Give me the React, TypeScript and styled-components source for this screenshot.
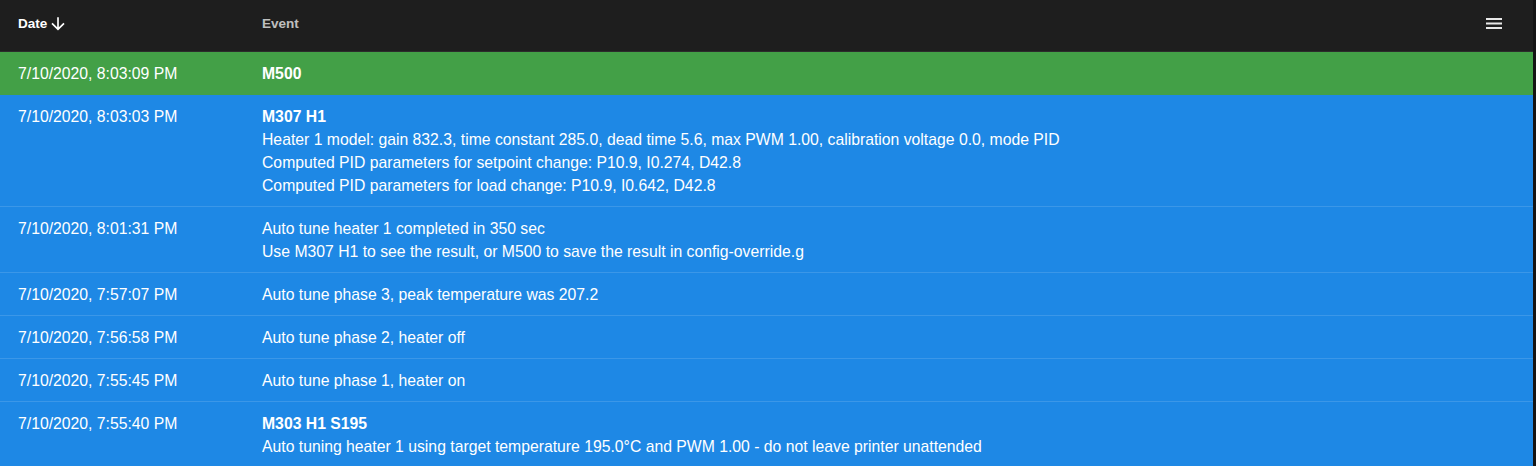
import React from "react";
import styled, { createGlobalStyle } from "styled-components";

const GlobalStyle = createGlobalStyle`
  html, body {
    margin: 0;
    padding: 0;
    background: #141414;
  }
  body {
    font-family: "Liberation Sans", Arial, sans-serif;
  }
`;

type Tone = "success" | "info";

interface LogEntry {
  date: string;
  title?: string;
  lines: string[];
  tone: Tone;
}

const entries: LogEntry[] = [
  { date: "7/10/2020, 8:03:09 PM", title: "M500", lines: [], tone: "success" },
  {
    date: "7/10/2020, 8:03:03 PM",
    title: "M307 H1",
    lines: [
      "Heater 1 model: gain 832.3, time constant 285.0, dead time 5.6, max PWM 1.00, calibration voltage 0.0, mode PID",
      "Computed PID parameters for setpoint change: P10.9, I0.274, D42.8",
      "Computed PID parameters for load change: P10.9, I0.642, D42.8",
    ],
    tone: "info",
  },
  {
    date: "7/10/2020, 8:01:31 PM",
    lines: [
      "Auto tune heater 1 completed in 350 sec",
      "Use M307 H1 to see the result, or M500 to save the result in config-override.g",
    ],
    tone: "info",
  },
  { date: "7/10/2020, 7:57:07 PM", lines: ["Auto tune phase 3, peak temperature was 207.2"], tone: "info" },
  { date: "7/10/2020, 7:56:58 PM", lines: ["Auto tune phase 2, heater off"], tone: "info" },
  { date: "7/10/2020, 7:55:45 PM", lines: ["Auto tune phase 1, heater on"], tone: "info" },
  {
    date: "7/10/2020, 7:55:40 PM",
    title: "M303 H1 S195",
    lines: ["Auto tuning heater 1 using target temperature 195.0°C and PWM 1.00 - do not leave printer unattended"],
    tone: "info",
  },
];

const toneColors: Record<Tone, string> = {
  success: "#43a047",
  info: "#1e88e5",
};

const Page = styled.div`
  padding-right: 3px;
  background: #141414;
  height: 466px;
  overflow: hidden;
`;

const Table = styled.div`
  display: grid;
  grid-template-columns: 244px 1fr auto;
  background: #1e88e5;
  min-height: 466px;
`;

const HeaderRow = styled.div`
  display: contents;
`;

const HeaderCell = styled.div<{ $active?: boolean; $end?: boolean }>`
  display: flex;
  align-items: center;
  height: 52px;
  box-sizing: border-box;
  padding: 0 ${(p) => (p.$end ? "31px" : "18px")} 5px 18px;
  background: #1e1e1e;
  border-bottom: 1px solid #2c2c2c;
  color: ${(p) => (p.$active ? "#ffffff" : "rgba(255,255,255,0.72)")};
  font-size: 13.5px;
  font-weight: bold;
`;

const SortIcon = styled.svg`
  width: 20px;
  height: 20px;
  margin-left: 1px;
  margin-top: 1px;
  fill: #ffffff;
`;

const MenuIcon = styled.svg`
  width: 16px;
  height: 11px;
  margin-top: 1px;
  fill: #e8e8e8;
`;

const Row = styled.div`
  display: contents;
`;

const Cell = styled.div<{ $tone: Tone; $span?: boolean }>`
  grid-column: ${(p) => (p.$span ? "2 / span 2" : "auto")};
  background: ${(p) => toneColors[p.$tone]};
  padding: 10px 18px 9px 18px;
  border-bottom: 1px solid
    ${(p) => (p.$tone === "success" ? toneColors.success : "rgba(255,255,255,0.13)")};
  color: #ffffff;
  font-size: 15.75px;
  line-height: 23px;
`;

const Title = styled.div`
  font-weight: bold;
`;

const Line = styled.div`
  white-space: nowrap;
`;

export default function App() {
  return (
    <>
      <GlobalStyle />
      <Page>
        <Table>
          <HeaderRow>
            <HeaderCell $active>
              Date
              <SortIcon viewBox="0 0 24 24">
                <path d="M11,4H13V16L18.5,10.5L19.92,11.92L12,19.84L4.08,11.92L5.5,10.5L11,16V4Z" />
              </SortIcon>
            </HeaderCell>
            <HeaderCell>Event</HeaderCell>
            <HeaderCell $end>
              <MenuIcon viewBox="0 0 16 11">
                <rect x="0" y="0" width="16" height="2" />
                <rect x="0" y="4.5" width="16" height="2" />
                <rect x="0" y="9" width="16" height="2" />
              </MenuIcon>
            </HeaderCell>
          </HeaderRow>
          {entries.map((e, i) => (
            <Row key={i}>
              <Cell $tone={e.tone}>{e.date}</Cell>
              <Cell $tone={e.tone} $span>
                {e.title && <Title>{e.title}</Title>}
                {e.lines.map((l, j) => (
                  <Line key={j}>{l}</Line>
                ))}
              </Cell>
            </Row>
          ))}
        </Table>
      </Page>
    </>
  );
}
